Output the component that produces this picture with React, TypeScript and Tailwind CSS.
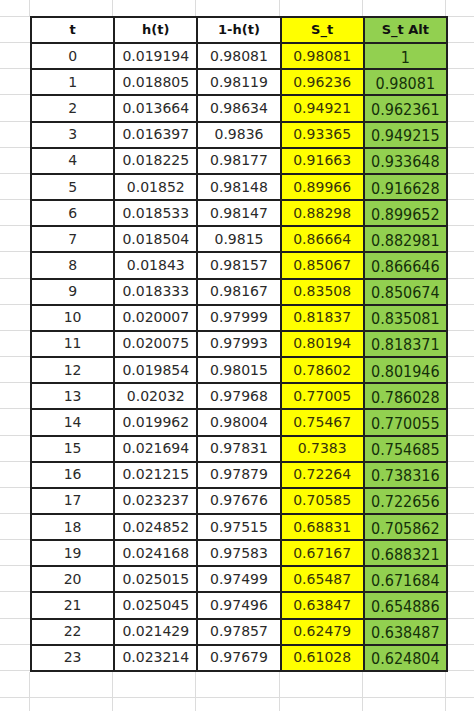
const rows: [string, string, string, string, string][] = [
  ["0", "0.019194", "0.98081", "0.98081", "1"],
  ["1", "0.018805", "0.98119", "0.96236", "0.98081"],
  ["2", "0.013664", "0.98634", "0.94921", "0.962361"],
  ["3", "0.016397", "0.9836", "0.93365", "0.949215"],
  ["4", "0.018225", "0.98177", "0.91663", "0.933648"],
  ["5", "0.01852", "0.98148", "0.89966", "0.916628"],
  ["6", "0.018533", "0.98147", "0.88298", "0.899652"],
  ["7", "0.018504", "0.9815", "0.86664", "0.882981"],
  ["8", "0.01843", "0.98157", "0.85067", "0.866646"],
  ["9", "0.018333", "0.98167", "0.83508", "0.850674"],
  ["10", "0.020007", "0.97999", "0.81837", "0.835081"],
  ["11", "0.020075", "0.97993", "0.80194", "0.818371"],
  ["12", "0.019854", "0.98015", "0.78602", "0.801946"],
  ["13", "0.02032", "0.97968", "0.77005", "0.786028"],
  ["14", "0.019962", "0.98004", "0.75467", "0.770055"],
  ["15", "0.021694", "0.97831", "0.7383", "0.754685"],
  ["16", "0.021215", "0.97879", "0.72264", "0.738316"],
  ["17", "0.023237", "0.97676", "0.70585", "0.722656"],
  ["18", "0.024852", "0.97515", "0.68831", "0.705862"],
  ["19", "0.024168", "0.97583", "0.67167", "0.688321"],
  ["20", "0.025015", "0.97499", "0.65487", "0.671684"],
  ["21", "0.025045", "0.97496", "0.63847", "0.654886"],
  ["22", "0.021429", "0.97857", "0.62479", "0.638487"],
  ["23", "0.023214", "0.97679", "0.61028", "0.624804"],
];

const cell =
  "w-[83.2px] shrink-0 border-r-2 border-[#1f1f1f] flex items-center justify-center";

function EmptyRow({ height }: { height: string }) {
  return (
    <div className={`flex ${height} border-b border-[#dcdcdc]`}>
      <div className="w-[30px] shrink-0 border-r border-[#dcdcdc]" />
      {[0, 1, 2, 3, 4].map((i) => (
        <div key={i} className="w-[83.2px] shrink-0 border-r border-[#dcdcdc]" />
      ))}
      <div className="flex-1" />
    </div>
  );
}

export default function App() {
  return (
    <div className="w-[474px] h-[711px] overflow-hidden bg-white font-['DejaVu_Sans',sans-serif] text-[14px] text-[#2a2a2a]">
      <EmptyRow height="h-[17px]" />

      <div className="flex">
        {/* left filler column */}
        <div className="w-[30px] shrink-0">
          {Array.from({ length: 25 }).map((_, i) => (
            <div key={i} className="h-[26.16px] border-b border-[#dcdcdc]" />
          ))}
        </div>

        {/* data table */}
        <div className="border-l-2 border-t-2 border-[#1f1f1f] -mt-[1px]">
          <div className="flex h-[26.16px] border-b-2 border-[#1f1f1f] font-bold text-[13px] text-[#111]">
            <div className={cell}>t</div>
            <div className={cell}>h(t)</div>
            <div className={cell}>1-h(t)</div>
            <div className={`${cell} bg-[#ffff00]`}>S_t</div>
            <div className={`${cell} bg-[#92d050]`}>S_t Alt</div>
          </div>
          {rows.map((r) => (
            <div key={r[0]} className="flex h-[26.16px] border-b-2 border-[#1f1f1f]">
              <div className={cell}>{r[0]}</div>
              <div className={cell}>{r[1]}</div>
              <div className={cell}>{r[2]}</div>
              <div className={`${cell} bg-[#ffff00] text-[#37330c]`}>{r[3]}</div>
              <div
                className={`${cell} bg-[#92d050] pt-[3px] font-['DejaVu_Sans_Condensed','DejaVu_Sans',sans-serif] [font-stretch:condensed] text-[16px] text-[#15300a]`}
              >
                {r[4]}
              </div>
            </div>
          ))}
        </div>

        {/* right filler column */}
        <div className="flex-1">
          {Array.from({ length: 25 }).map((_, i) => (
            <div key={i} className="h-[26.16px] border-b border-[#dcdcdc]" />
          ))}
        </div>
      </div>

      <EmptyRow height="h-[26px]" />
      <EmptyRow height="h-[26px]" />
    </div>
  );
}
